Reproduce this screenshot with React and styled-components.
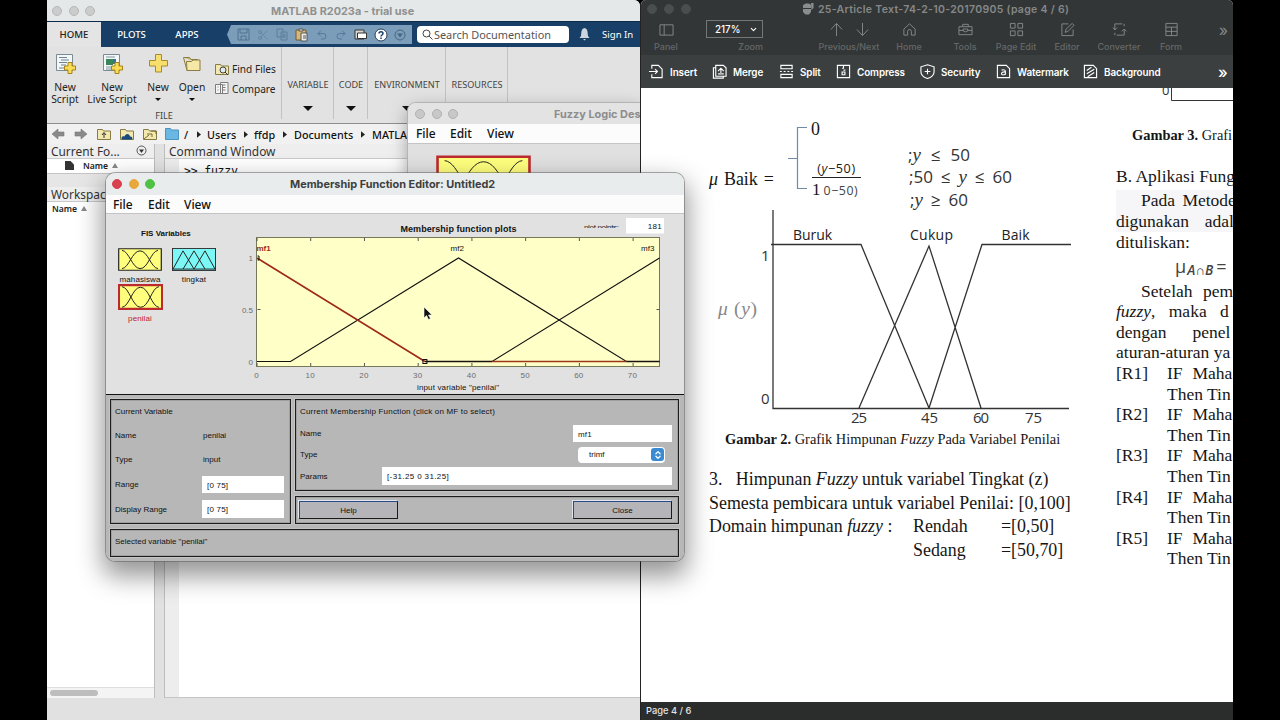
import React from 'react';
import styled, { createGlobalStyle } from 'styled-components';
import { Undo2, Redo2, Scissors, ChevronDown, ChevronsUpDown } from 'lucide-react';

const GlobalStyle = createGlobalStyle`
  * {
    box-sizing: border-box;
  }
  body {
    margin: 0;
    background: #000;
    overflow: hidden;
  }
  svg {
    display: block;
    flex: none;
  }
`;

const Desktop = styled.div`
  position: relative;
  width: 1280px;
  height: 720px;
  background: #000;
  overflow: hidden;
  white-space: nowrap;
  font-family: "Noto Sans", sans-serif;
`;

const Window = styled.section`
  position: absolute;
  display: flex;
  flex-direction: column;
  overflow: hidden;
`;

const TitleBar = styled.header`
  display: flex;
  align-items: center;
  flex: none;
  height: ${props => props.$h}px;
  padding-left: ${props => props.$left}px;
  background: ${props => props.$bg};
`;

const Lights = styled.div`
  display: flex;
  gap: ${props => props.$gap || 6.5}px;
`;

const Light = styled.i`
  width: 10px;
  height: 10px;
  border-radius: 50%;
  background: ${props => props.$color};
  border: 1px solid ${props => props.$edge || props.$color};
`;

const Title = styled.h1`
  margin: 0 0 0 ${props => props.$left}px;
  font: ${props => props.$weight || 700} ${props => props.$size || 10.9}px Inter, sans-serif;
  letter-spacing: ${props => props.$ls || 0}px;
  color: ${props => props.$color};
`;

/* ---------- MATLAB desktop ---------- */

const MatlabWindow = styled(Window)`
  left: 47px;
  top: 0;
  width: 593px;
  height: 720px;
  background: #e1e1e1;
  border-radius: 0 6px 0 0;
`;

const TabBar = styled.nav`
  display: flex;
  align-items: center;
  height: 26px;
  flex: none;
  background: #173f67;
  border-top: 1px solid #0d2a4a;
`;

const Tab = styled.div`
  width: ${props => props.$w}px;
  height: 25px;
  line-height: 25px;
  text-align: center;
  font-size: 9.6px;
  font-weight: 500;
  color: ${props => (props.$active ? '#222' : '#fff')};
  background: ${props => (props.$active ? '#e4e4e4' : 'none')};
`;

const QuickAccess = styled.div`
  display: flex;
  align-items: center;
  gap: 6.8px;
  width: 185px;
  height: 19px;
  margin-left: 15px;
  padding-left: 10px;
  background: #7c9db9;
  clip-path: polygon(0 50%, 4px 0, 100% 0, 100% 100%, 4px 100%);
`;

const SearchBox = styled.div`
  display: flex;
  align-items: center;
  width: 152px;
  height: 17px;
  margin-left: 5px;
  padding-left: 5px;
  gap: 1px;
  border-radius: 4px;
  background: #fff;
  color: #555;
  font-size: 10.9px;
`;

const BellIcon = styled.svg`
  margin-left: 10px;
`;

const SignIn = styled.span`
  margin-left: 12px;
  font-size: 9.6px;
  color: #fff;
`;

const ToolStrip = styled.div`
  display: flex;
  height: 77px;
  flex: none;
  background: #e2e2e2;
  border-bottom: 1px solid #8e8e8e;
`;

const FileSection = styled.div`
  width: 235px;
  height: 72px;
  border-right: 1px solid #c2c2c2;
`;

const FileTools = styled.div`
  display: flex;
  height: 63px;
  padding-top: 6px;
`;

const Tool = styled.div`
  display: flex;
  flex-direction: column;
  align-items: center;
  width: ${props => props.$w}px;
  font-size: 10.3px;
  line-height: 12.4px;
  color: #222;
  text-align: center;
  white-space: pre;

  & > span {
    margin: 7px -10px 0;
  }
  & > i {
    margin-top: 5px;
  }
`;

const SideTools = styled.div`
  display: flex;
  flex-direction: column;
  gap: 4px;
  padding: 8px 0 0 6px;
`;

const SideTool = styled.div`
  display: flex;
  align-items: center;
  gap: 3px;
  height: 16px;
  font-size: 10.1px;
  color: #222;
`;

const SectionName = styled.div`
  text-align: center;
  font-size: 9.1px;
  line-height: 11px;
  color: #444;
`;

const StripSection = styled.div`
  display: flex;
  flex-direction: column;
  align-items: center;
  width: ${props => props.$w}px;
  height: 72px;
  padding: 32px 0 0 1px;
  gap: 16px;
  border-right: 1px solid #c2c2c2;
`;

const Arrow = styled.i`
  width: 0;
  height: 0;
  border: ${props => props.$s || 5}px solid transparent;
  border-top-color: #111;
  border-bottom: 0;
`;

const AddressBar = styled.div`
  display: flex;
  align-items: center;
  height: 20px;
  flex: none;
  background: #f1f1f1;
  font-size: 10.8px;
  font-weight: 500;
  color: #111;
`;

const NavIcons = styled.div`
  display: flex;
  align-items: center;
  gap: 9px;
  width: 118px;
  padding-left: 4px;
`;

const Crumb = styled.span`
  flex: none;
  width: ${props => props.$w}px;
`;

const Panes = styled.div`
  display: flex;
  height: 554px;
  flex: none;
`;

const LeftPane = styled.div`
  width: 108px;
  border-right: 1px solid #bdbdbd;
  display: flex;
  flex-direction: column;
  background: #fff;
`;

const PaneHeader = styled.div`
  display: flex;
  align-items: center;
  justify-content: space-between;
  height: 15px;
  flex: none;
  padding: 0 7px 1px 4px;
  background: #eeeeee;
  border-bottom: 1px solid #c9c9c9;
  font-size: 11.9px;
  line-height: 14px;
  color: #333;
`;

const ColumnRow = styled.div`
  display: flex;
  align-items: center;
  gap: 4px;
  height: 14px;
  flex: none;
  padding: 0 0 1px ${props => props.$left}px;
  font-size: 8.6px;
  font-weight: 600;
  color: #222;
`;

const Divider = styled.div`
  height: 14px;
  flex: none;
  background: #e6e6e6;
  border-top: 1px solid #c5c5c5;
`;

const ScrollTrack = styled.div`
  height: 11px;
  margin-top: auto;
  padding: 2px 3px;
  background: #f4f4f4;
  border-top: 1px solid #dedede;

  & > i {
    display: block;
    width: 48px;
    height: 6px;
    border-radius: 3px;
    background: #bdbdbd;
  }
`;

const CommandPane = styled.div`
  flex: 1;
  margin-left: 9px;
  border-left: 1px solid #bdbdbd;
  border-bottom: 1px solid #c5c5c5;
`;

const CommandBody = styled.pre`
  margin: 0;
  height: 538px;
  padding: 6px 0 0 5px;
  border-left: 14px solid #ededed;
  background: #fff;
  font: 11.5px/13px "DejaVu Sans Mono", monospace;
  letter-spacing: -0.2px;
  color: #111;
`;

/* ---------- Fuzzy logic designer ---------- */

const FuzzyWindow = styled(Window)`
  left: 408px;
  top: 103px;
  width: 232px;
  height: 400px;
  background: #e0e0e0;
  border-radius: 8px 0 0 0;
  box-shadow: 0 0 0 1px #b4b4b4, 0 6px 18px rgba(0, 0, 0, 0.35);
`;

const MenuBar = styled.div`
  display: flex;
  align-items: center;
  flex: none;
  height: ${props => props.$h}px;
  padding-left: ${props => props.$left}px;
  background: #fbfcfb;
  border-bottom: 1px solid #c4c4c4;
  font-size: 12px;
  font-weight: 500;
  color: #111;
`;

const MenuItem = styled.span`
  width: ${props => props.$w}px;
`;

const DesignerBody = styled.div`
  padding: 11px 0 0 28px;
`;

/* ---------- Membership function editor ---------- */

const EditorWindow = styled(Window)`
  left: 106px;
  top: 173px;
  width: 578px;
  height: 388px;
  background: #e1e1e1;
  border-radius: 9px;
  box-shadow: 0 0 0 1px rgba(90, 90, 90, 0.5), 0 12px 26px 3px rgba(0, 0, 0, 0.42);
`;

const PlotArea = styled.div`
  display: flex;
  height: 181px;
  flex: none;
  border-bottom: 1px solid #111;
  font: 8px "Liberation Sans", sans-serif;
`;

const Variables = styled.div`
  width: 122px;
  padding: 15px 0 0 11px;
`;

const VariablesTitle = styled.div`
  height: 18px;
  padding-left: 24px;
  font-weight: 700;
  color: #111;
`;

const VariableGrid = styled.div`
  display: grid;
  grid-template-columns: 46px 46px;
  column-gap: 8px;
`;

const Variable = styled.div`
  display: flex;
  flex-direction: column;
  align-items: center;
  height: 37px;
  gap: 3.5px;
  color: ${props => (props.$selected ? '#c0222f' : '#111')};
  padding-top: ${props => (props.$selected ? 0 : 1)}px;
  letter-spacing: 0.1px;
`;

const FormArea = styled.div`
  display: grid;
  grid-template-columns: 181px 384px;
  grid-template-rows: 92px 28px 28px;
  gap: 5px 4px;
  padding: 4px 4px;
  flex: 1;
  background: #b7b7b7;
  font: 8px "Liberation Sans", sans-serif;
  color: #111;
`;

const Panel = styled.div`
  border: 1px solid #1c1c1c;
  box-shadow: inset 0 0 0 1px rgba(90, 90, 90, 0.25), 0 0 0 1px rgba(220, 220, 220, 0.35);
  padding-left: 4px;
`;

const CurrentPanel = styled(Panel)`
  grid-row: 1 / 3;
`;

const StatusPanel = styled(Panel)`
  grid-column: 1 / 3;
  line-height: 24px;
`;

const ButtonPanel = styled(Panel)`
  display: flex;
  align-items: center;
  justify-content: space-between;
  padding: 0 6px 0 3px;
`;

const PanelTitle = styled.div`
  height: 23px;
  line-height: 23px;
  letter-spacing: ${props => props.$ls || 0}px;
`;

const Field = styled.div`
  display: flex;
  align-items: center;
  height: ${props => props.$h}px;
`;

const FieldLabel = styled.span`
  width: ${props => props.$w}px;
`;

const Input = styled.div`
  width: ${props => props.$w}px;
  height: 17.5px;
  margin-left: ${props => props.$left || 0}px;
  padding-left: 5px;
  line-height: 19px;
  letter-spacing: ${props => props.$ls || 0.2}px;
  background: #fff;
`;

const Select = styled.div`
  display: flex;
  align-items: center;
  justify-content: space-between;
  width: 87px;
  height: 16px;
  margin-left: 197px;
  padding: 0 1px 0 11px;
  border-radius: 4px;
  background: #fff;
`;

const Stepper = styled.i`
  display: flex;
  align-items: center;
  justify-content: center;
  width: 13px;
  height: 13px;
  border-radius: 3px;
  background: #3a8bd2;
  color: #fff;
`;

const PushButton = styled.div`
  width: 99px;
  height: 18px;
  line-height: 17px;
  text-align: center;
  background: #b5b5b9;
  border: 1px solid #1a1a1a;
  border-top-color: #2c4a86;
  border-left-color: #2c4a86;
  box-shadow: -1px -1px 0 #dfe6ee;
`;

/* ---------- PDF reader ---------- */

const PdfWindow = styled(Window)`
  left: 641px;
  top: 0;
  width: 592px;
  height: 720px;
  background: #fff;
  border-radius: 5px 5px 0 0;
  box-shadow: -1px 0 0 #222;
`;

const PdfTools = styled.div`
  display: grid;
  grid-template-columns: 50px 128px 60px 60px 52px 50px 52px 52px 52px 36px;
  height: 37px;
  flex: none;
  background: #333636;
  font: 500 9px Inter, sans-serif;
`;

const PdfTool = styled.div`
  display: flex;
  flex-direction: column;
  align-items: center;
  justify-content: space-between;
  height: 34px;
  padding: 3px 0 0;
  color: #646868;

  & > div {
    display: flex;
    gap: 11px;
    height: 17px;
    align-items: center;
    color: #858989;
  }
`;

const ZoomTool = styled(PdfTool)`
  align-items: flex-end;
  width: 72px;
  padding-top: 2px;
`;

const ZoomBox = styled.div`
  && {
    justify-content: space-between;
    width: 57px;
    height: 18px;
    padding: 0 4px 0 8px;
    border: 1px solid #737777;
    color: #fff;
    font-size: 9.8px;
    gap: 0;
  }
`;

const MoreTools = styled(PdfTool)`
  align-items: flex-end;
  padding-right: 5px;
`;

const ActionBar = styled.div`
  display: flex;
  align-items: center;
  height: 33px;
  flex: none;
  padding-left: 8px;
  background: #3b3f3f;
  color: #fff;
  font: 600 9.9px Inter, sans-serif;
`;

const Action = styled.div`
  display: flex;
  align-items: center;
  gap: 6px;
  width: ${props => props.$w}px;
  letter-spacing: -0.1px;
`;

const More = styled.span`
  font: ${props => props.$weight || 400} 16px/20px Inter, sans-serif;
`;

const Page = styled.main`
  display: flex;
  height: 614px;
  flex: none;
  background: #fff;
  font-family: "Liberation Serif", serif;
  font-size: 17.9px;
  color: #161616;
  overflow: hidden;
`;

const LeftColumn = styled.article`
  width: 475px;
  padding-left: 68px;
`;

const RightColumn = styled.article`
  width: 117px;
  font-size: 17.5px;
`;

const Formula = styled.div`
  display: flex;
  height: 117px;
  padding-top: 31px;
`;

const FormulaName = styled.div`
  width: 78px;
  padding-top: 50px;
  line-height: 20px;
  word-spacing: 1.5px;
`;

const Cases = styled.div`
  width: 101px;
  padding-left: 4px;
  line-height: 20px;
`;

const Fraction = styled.div`
  width: 49px;
  margin: 23px 0 0 1px;
  text-align: center;
  font: 12.6px/14px "Open Sans", sans-serif;

  & > div:first-child {
    border-bottom: 1.5px solid #222;
    height: 16px;
    letter-spacing: 0.6px;
  }
`;

const Overlap = styled.div`
  display: flex;
  align-items: baseline;
  gap: 3px;
  font: 12.3px/16px "Open Sans", sans-serif;
  letter-spacing: 0.6px;
  color: #444;

  & > b {
    font: 17px/24px "Liberation Serif", serif;
    letter-spacing: 0;
    color: #161616;
  }
`;

const Conditions = styled.div`
  padding-top: 25px;
  font: 17px/22.3px "Open Sans", sans-serif;
  color: #333;

  & > div {
    word-spacing: ${props => props.$ws}px;
  }
  & i {
    font-family: "Liberation Serif", serif;
    font-size: 19px;
  }
`;

const Condition = styled.p`
  margin: 0;
  padding-left: ${props => props.$left || 0}px;
  word-spacing: ${props => props.$ws}px;
`;

const Caption = styled.div`
  height: 21px;
  margin: ${props => props.$m};
  font-size: 14.4px;
  line-height: 21px;
`;

const TextLine = styled.div`
  display: flex;
  height: ${props => props.$h || 20.6}px;
  line-height: ${props => props.$h || 20.6}px;
  padding-left: ${props => props.$left || 0}px;
  word-spacing: ${props => props.$ws || 0}px;
  white-space: pre;
`;

const Cell = styled.span`
  flex: none;
  width: ${props => props.$w}px;
`;

const Shaded = styled.div`
  background: #f6f6f8;
  height: 42px;
  margin-top: 4px;
`;

const Intersection = styled.div`
  display: flex;
  height: 28px;
  padding-left: 59px;
  font: 18px/27px "Open Sans", sans-serif;
  color: #444;

  & > sub {
    font: italic 600 13.5px/34px "Open Sans", sans-serif;
    vertical-align: baseline;
    margin: 0 3px 0 1px;
  }
`;

const PdfFooter = styled.footer`
  height: 18px;
  padding-left: 5px;
  font: 500 9.3px/18px Inter, sans-serif;
  color: #e4e4e4;
  background: #2b2d2d;
`;

const DocIcon = styled.svg`
  margin-left: 111px;
`;

const Pointer = styled.svg`
  position: absolute;
  left: 423px;
  top: 306px;
`;

const Gaussians = ({ w, h, selected }) => (
  <svg width={w} height={h} viewBox="0 0 44 24" preserveAspectRatio="none">
    <rect x=".7" y=".8" width="42.600" height="22.400" fill="#ffff7d" stroke={selected ? '#bb2a2e' : '#222'} strokeWidth={selected ? 2.6 : 1.2} vectorEffect="non-scaling-stroke" />
    <path d="M4 2.500C11 3 14 21 22 21.500S33 3 40 2.500M4 21.500C11 21 14 3 22 3S33 21 40 21.500" fill="none" stroke="#222" vectorEffect="non-scaling-stroke" />
  </svg>
);

const Triangles = () => (
  <svg width="44" height="23" viewBox="0 0 44 24" preserveAspectRatio="none">
    <rect x=".5" y=".5" width="43" height="23" fill="#7df7f5" stroke="#333" />
    <path d="M1 22 11 3 22 22M11 22 22 3 33 22M22 22 33 3 43 22M1 22H43" fill="none" stroke="#222" />
  </svg>
);

const ScriptIcon = ({ live }) => (
  <svg width="21" height="21" viewBox="0 0 21 21">
    <path d="M1.500 1.500h16v16h-16z" fill="#f4f7f8" stroke="#7b8b94" />
    {live ? (
      <>
        <path d="M4 4h9M4 14h5M4 16h6" stroke="#7f97a3" />
        <path d="M4 6h7v6H4z" fill="#39855a" />
        <path d="M11 6h3v5h-3z" fill="#3e6f9c" />
      </>
    ) : (
      <path d="M4 4.500h8M6 7h8M4 9.500h8M6 12h5M4 15h6" stroke="#6d8390" />
    )}
    <path d="M13 9.500h4v3.500h3.500v4H17v3.500h-4V17H9.500v-4H13z" fill="#f9dc55" stroke="#a98318" />
  </svg>
);

const PlusIcon = () => (
  <svg width="21" height="21" viewBox="0 0 21 21">
    <path d="M7.500 1.500h6v6h6v5.500h-6v6h-6v-6h-6V7.500h6z" fill="#f8df6d" stroke="#a98a2a" />
  </svg>
);

const OpenIcon = () => (
  <svg width="20" height="21" viewBox="0 0 20 21">
    <path d="M1.500 4.500h6l1.500 2h6.500v3M1.500 4.500 5 17.500" fill="#cdb75b" stroke="#8b7c3f" />
    <path d="M4.500 8.500h5l1.500-1.500h7v10.500H5z" fill="#f6e8a6" stroke="#8b7c3f" />
  </svg>
);

const FolderIcon = ({ kind }) => (
  <svg width="14" height="12" viewBox="0 0 14 12">
    <path d="M.5 1.500h5l1 1.500h7v8.500H.5z" fill="#f3e9b0" stroke="#877b45" />
    {kind === 'up' && <path d="M7 10V5M5 7l2-2.500L9 7" fill="none" stroke="#333" />}
    {kind === 'cloud' && <path d="M2 11.500c-1.500-3 1-4 2.500-3C5.500 5 9.500 5 10 8.500c2.500 0 3 2 2 3z" fill="#174c80" />}
    {kind === 'browse' && <path d="M1 11l5-4M4 6h5v3M8 3h5v3" fill="none" stroke="#7a6a2a" />}
    {kind === 'find' && <><circle cx="8" cy="7" r="3" fill="#dfeaf0" stroke="#444" /><path d="M10 9l3 3" stroke="#333" /></>}
  </svg>
);

const NavArrow = ({ flip }) => (
  <svg width="14" height="12" viewBox="0 0 14 12">
    <path d="M1 6l6-5v3h6v4H7v3z" fill="#8a8a8a" stroke="#777" strokeWidth=".6" transform={flip ? 'rotate(180 7 6)' : undefined} />
  </svg>
);

const CompareIcon = () => (
  <svg width="14" height="14" viewBox="0 0 14 14" fill="#f5f5f5" stroke="#7d7d7d">
    <path d="M.5 2.500h7v9h-7zM5.500.5h7.500v11H5.500zM7.500 3h3M7.500 5.500h3M8 8h2.500M2.500 5h1M2.500 8h1" />
  </svg>
);

const Caret = () => (
  <svg width="4" height="7" viewBox="0 0 5 8"><path d="M0 0l5 4-5 4z" fill="#222" /></svg>
);

const SortMark = () => (
  <svg width="6" height="5" viewBox="0 0 6 5"><path d="M0 5l3-5 3 5z" fill="#888" /></svg>
);

const QuickIcons = () => (
  <>
    <svg width="13" height="13" viewBox="0 0 13 13" fill="none" stroke="#4f7390"><path d="M1 1h11v11H1zM3 1v4h7V1M4 12V8h5v4" /></svg>
    <Scissors size={12} color="#62839e" strokeWidth={1.6} />
    <svg width="13" height="13" viewBox="0 0 13 13" fill="none" stroke="#5d7f9b"><path d="M1 1h6v8H1zM5 4h6v8H5zM7 7h3M7 9h3" /></svg>
    <svg width="14" height="14" viewBox="0 0 14 14"><path d="M1 2h10v10H1z" fill="#d8b779" stroke="#705c36" /><path d="M4 1h4v2H4zM6 5h6v8H6zM8 8h3M8 10h3" fill="#eee" stroke="#555" /></svg>
    <Undo2 size={12} color="#55789a" strokeWidth={2} />
    <Redo2 size={12} color="#55789a" strokeWidth={2} />
    <svg width="13" height="12" viewBox="0 0 13 12"><path d="M1 1h9v9H1z" fill="#d8d8d0" stroke="#333" /><path d="M3.500 4h9v5.500h-9z" fill="#fff" stroke="#333" /></svg>
    <svg width="14" height="14" viewBox="0 0 14 14"><circle cx="7" cy="7" r="6" fill="#fff" stroke="#27425c" /><path d="M5 5.500C5 3 9 3 9 5.500 9 7 7 7 7 8.500M7 9.500V11" fill="none" stroke="#173f67" strokeWidth="1.500" /></svg>
    <svg width="12" height="12" viewBox="0 0 12 12"><circle cx="6" cy="6" r="5" fill="none" stroke="#466681" /><path d="M3 4.500h6L6 8.500z" fill="#466681" /></svg>
  </>
);

const Line = ({ d, sw = 1 }) => (
  <svg width="15" height="15" viewBox="0 0 16 16" fill="none" stroke="currentColor" strokeWidth={sw}>
    <path d={d} />
  </svg>
);

const pdfTools = [
  { name: 'Home', d: 'M2 7.500 8 2l6 5.500V14h-4v-4a2 2 0 0 0-4 0v4H2z' },
  { name: 'Tools', d: 'M1 5h14v8.500H1zM5 5V2.500h6V5M1 9h4.500M10.500 9H15M5.500 7.500h5v1a2.500 2 0 0 1-5 0z' },
  { name: 'Page Edit', d: 'M1.500 1.500h5v5h-5zM9.500 1.500h5v5h-5zM1.500 9.500h5v5h-5zM9.500 9.500h5v5h-5z' },
  { name: 'Editor', d: 'M9 2H2v12.500h12V8M5.500 11l1-3.500L13 1.500 15 3.500 8.500 10z' },
  { name: 'Converter', d: 'M3 8V2h8M1 6l2 2.500L5.500 6M13 8v6H5M10.500 10 13 7.500 15.500 10M13 2v2.500M3 14v-2.500' },
  { name: 'Form', d: 'M2 1.500h12v13H2zM2 5.500h12M8 5.500v9M2 10h12' },
];

const actions = [
  { name: 'Insert', w: 63, d: 'M3 5V1.500h7L14 5.500v9H3V11M0 8h9M6.500 5.500 9 8l-2.500 2.500' },
  { name: 'Merge', w: 67, d: 'M4 1.500h8L15 4v9H4zM4 4H1.500v11H12V13M9.500 11.500V4.500M6.500 7.500l3-3 3 3M6.500 10.500h2M10.500 10.500h2' },
  { name: 'Split', w: 57, d: 'M2 5V1.500h12V5zM2 14.500V11h12v3.500zM1 8h2M5 8h2M9 8h2M13 8h2' },
  { name: 'Compress', w: 84, d: 'M1.500 1.500h13v13h-13zM8 2v2M6.500 4.500h2M8 6.500h2M6.500 8.500h3v3h-3z' },
  { name: 'Security', w: 76, d: 'M8 .8 15 3v5.500C15 12 11 14.500 8 15.500 5 14.500 1 12 1 8.500V3zM8 5v6M5 8h6' },
  { name: 'Watermark', w: 87, d: 'M1.500 1.500H11L14.500 5v9.500h-13zM6 6.500c3.500-1 4 .5 4 1.500v3.500M10 8.500c-5-.5-5 3-2.500 3 1.500 0 2.500-1 2.500-1.500' },
  { name: 'Background', w: 135, d: 'M1.500 1.500H11L14.500 5v9.500h-13zM4 7l5-3.500M4 10.500l8-5M5 13.500l7-4.500' },
];

const tickX = [0, 10, 20, 30, 40, 50, 60, 70];
const px = v => 24.5 + v * 5.373;

const MembershipPlot = () => (
  <svg width="448" height="178" viewBox="0 0 448 178" fontFamily="Liberation Sans" fontSize="8">
    <g transform="translate(4.500 0)">
      <rect x="24" y="23.500" width="403" height="129" fill="#ffffc8" stroke="#77775c" />
      {tickX.map(v => (
        <g key={v}>
          <path d={`M${px(v)} 152v-3M${px(v)} 24v3`} stroke="#555" />
          <text x={px(v) - 0.5} y="164" textAnchor="middle" fill="#6d6d6d" letterSpacing=".3">{v}</text>
        </g>
      ))}
      <path d="M25 95.500h3M427 95.500h-3" stroke="#555" />
      <g fill="#6d6d6d" textAnchor="end">
        <text x="20.500" y="47">1</text>
        <text x="20.500" y="98.500">0.5</text>
        <text x="20.500" y="151">0</text>
      </g>
      <g fill="none" stroke="#111" strokeWidth="1.100">
        <path d={`M24.500 147.500H${px(6.25)}L${px(37.5)} 44L${px(68.75)} 147.500H427`} />
        <path d={`M${px(31.25)} 147.500H${px(43.75)}L427 44`} />
      </g>
      <path d={`M24.500 44 ${px(31.25)} 147.500`} fill="none" stroke="#9d2a18" strokeWidth="1.600" />
      <path d={`M${px(31.25)} 147.500H${px(43.75)}M${px(68.75)} 147.500H427`} stroke="#1a1010" strokeWidth="1.700" />
      <path d={`M${px(43.75)} 147.500H${px(68.75)}`} stroke="#9d3518" strokeWidth="1.600" />
      <path d="M25 42h1.500v4H25" fill="none" stroke="#111" />
      <rect x={px(31.25) - 2} y="145.500" width="4" height="4" fill="none" stroke="#111" />
      <text x="24" y="37" fill="#9d2a18" fontWeight="700">mf1</text>
      <text x="218" y="37" fill="#111">mf2</text>
      <text x="408.500" y="37" fill="#111">mf3</text>
      <text x="168" y="18" fontSize="9" fontWeight="700" fill="#111" textLength="116">Membership function plots</text>
      <text x="184.500" y="175.500" fill="#111" textLength="82">input variable "penilai"</text>
      <svg x="350.500" y="10" width="40" height="4"><text x="1" y="5.500" fontSize="8" fill="#222" textLength="35">plot points:</text></svg>
      <rect x="393.500" y="4" width="38" height="15.500" fill="#fff" />
      <text x="429.500" y="15" textAnchor="end" fill="#111" letterSpacing=".3">181</text>
    </g>
  </svg>
);

const VariableChart = () => (
  <svg width="400" height="222" viewBox="0 0 400 222">
    <g transform="translate(-709 -205)" fill="none" stroke="#333" strokeWidth="1.300">
      <path d="M773 210V408.500H1069M771 244.500H861L929 408M859 408 929 246 981 408M929 408 982 244.500H1071" />
    </g>
    <g transform="translate(-709 -205)" fontFamily="Open Sans" fontSize="14" fill="#222">
      <text x="793" y="240" textLength="39">Buruk</text>
      <text x="910" y="240" textLength="43">Cukup</text>
      <text x="1001.500" y="240" textLength="28">Baik</text>
      <g fontSize="15" fill="#333">
        <text x="761" y="261">1</text>
        <text x="761" y="404">0</text>
        <text x="851" y="423" textLength="16">25</text>
        <text x="921" y="423" textLength="17">45</text>
        <text x="973" y="423" textLength="16">60</text>
        <text x="1025" y="423" textLength="17">75</text>
      </g>
      <text x="718" y="315" fontFamily="Liberation Serif" fontSize="19.500" fill="#888" textLength="39"><tspan fontStyle="italic">μ</tspan> (<tspan fontStyle="italic">y</tspan>)</text>
    </g>
  </svg>
);

const sections = [
  { name: 'VARIABLE', w: 52 },
  { name: 'CODE', w: 34 },
  { name: 'ENVIRONMENT', w: 78 },
  { name: 'RESOURCES', w: 62 },
];

const rules = [1, 2, 3, 4, 5];

const App = () => (
  <Desktop>
    <GlobalStyle />

    <MatlabWindow>
      <TitleBar $h={21} $left={5} $bg="#e5e8e8">
        <Lights>
          {[0, 1, 2].map(n => <Light key={n} $color="#cbcccc" $edge="#b6b7b7" />)}
        </Lights>
        <Title $left={176} $color="#8f9191">MATLAB R2023a - trial use</Title>
      </TitleBar>
      <TabBar>
        <Tab $w={54} $active>HOME</Tab>
        <Tab $w={61}>PLOTS</Tab>
        <Tab $w={50}>APPS</Tab>
        <QuickAccess><QuickIcons /></QuickAccess>
        <SearchBox>
          <svg width="11" height="11" viewBox="0 0 11 11" fill="none" stroke="#444"><circle cx="4.500" cy="4.500" r="3.500" /><path d="M7 7l3.500 3.500" /></svg>
          Search Documentation
        </SearchBox>
        <BellIcon width="11" height="13" viewBox="0 0 11 13"><path d="M5.500 0C2 1 2.500 4 2 8L.5 10h10L9 8C8.500 4 9 1 5.500 0zM4 11h3l-1.500 1.500z" fill="#cdd6de" /></BellIcon>
        <SignIn>Sign In</SignIn>
      </TabBar>
      <ToolStrip>
        <FileSection>
          <FileTools>
            <Tool $w={36}><ScriptIcon /><span>{'New\nScript'}</span></Tool>
            <Tool $w={58}><ScriptIcon live /><span>{'New\nLive Script'}</span></Tool>
            <Tool $w={34}><PlusIcon /><span>New</span><Arrow $s={3.5} /></Tool>
            <Tool $w={34}><OpenIcon /><span>Open</span><Arrow $s={3.5} /></Tool>
            <SideTools>
              <SideTool><FolderIcon kind="find" />Find Files</SideTool>
              <SideTool><CompareIcon />Compare</SideTool>
            </SideTools>
          </FileTools>
          <SectionName>FILE</SectionName>
        </FileSection>
        {sections.map(section => (
          <StripSection key={section.name} $w={section.w}>
            <SectionName>{section.name}</SectionName>
            <Arrow />
          </StripSection>
        ))}
      </ToolStrip>
      <AddressBar>
        <NavIcons>
          <NavArrow />
          <NavArrow flip />
          <FolderIcon kind="up" />
          <FolderIcon kind="cloud" />
          <FolderIcon kind="browse" />
        </NavIcons>
        <Crumb $w={19}><svg width="14" height="12"><path d="M.5.5h5l1 1.500h7v9.500H.5z" fill="#69b7e2" stroke="#4b93bd" /></svg></Crumb>
        <Crumb $w={13}>/</Crumb>
        <Crumb $w={10}><Caret /></Crumb>
        <Crumb $w={37}>Users</Crumb>
        <Crumb $w={10}><Caret /></Crumb>
        <Crumb $w={29}>ffdp</Crumb>
        <Crumb $w={11}><Caret /></Crumb>
        <Crumb $w={67}>Documents</Crumb>
        <Crumb $w={11}><Caret /></Crumb>
        <Crumb $w={50}>MATLA</Crumb>
      </AddressBar>
      <Panes>
        <LeftPane>
          <PaneHeader>
            Current Fo...
            <svg width="11" height="11" viewBox="0 0 11 11"><circle cx="5.500" cy="5.500" r="4.500" fill="none" stroke="#555" /><path d="M3 4.500h5L5.500 8z" fill="#333" /></svg>
          </PaneHeader>
          <ColumnRow $left={18}>
            <svg width="9" height="9"><path d="M0 0h5.500L9 3.500V9H0z" fill="#333" /></svg>
            <Crumb $w={1} />
            Name <SortMark />
          </ColumnRow>
          <Divider />
          <PaneHeader>Workspace</PaneHeader>
          <ColumnRow $left={5}>Name <SortMark /></ColumnRow>
          <ScrollTrack><i /></ScrollTrack>
        </LeftPane>
        <CommandPane>
          <PaneHeader>Command Window</PaneHeader>
          <CommandBody>&gt;&gt; fuzzy</CommandBody>
        </CommandPane>
      </Panes>
    </MatlabWindow>

    <FuzzyWindow>
      <TitleBar $h={21} $left={7} $bg="#e3e3e3">
        <Lights>
          {[0, 1, 2].map(n => <Light key={n} $color="#c8c8c8" $edge="#b0b0b0" />)}
        </Lights>
        <Title $left={96} $color="#8d8d8d">Fuzzy Logic Des</Title>
      </TitleBar>
      <MenuBar $h={20} $left={8}>
        <MenuItem $w={34}>File</MenuItem>
        <MenuItem $w={37}>Edit</MenuItem>
        <MenuItem>View</MenuItem>
      </MenuBar>
      <DesignerBody><Gaussians w={95} h={54} selected /></DesignerBody>
    </FuzzyWindow>

    <PdfWindow>
      <TitleBar $h={18} $left={6} $bg="#333636">
        <Lights $gap={7}>
          {[0, 1, 2].map(n => <Light key={n} $color="#4b4e4e" />)}
        </Lights>
        <DocIcon width="13" height="12" viewBox="0 0 13 12"><path d="M1 5V2.500C3 0 7 0 9 2v3zM1 6h8v3L7 11.500H3.500L1 9zM9 0h2.500v5l-2 2" fill="#8b8e8e" /></DocIcon>
        <Title $left={3} $size={10.5} $color="#858888" $weight={600} $ls={0.31}>25-Article Text-74-2-10-20170905 (page 4 / 6)</Title>
      </TitleBar>
      <PdfTools>
        <PdfTool>
          <div><Line d="M1 3h14v11H1zM5.500 3v11" /></div>
          Panel
        </PdfTool>
        <ZoomTool>
          <ZoomBox>217%<ChevronDown size={9} strokeWidth={3} /></ZoomBox>
          Zoom
        </ZoomTool>
        <PdfTool>
          <div>
            <Line d="M8 15V2M2 8l6-6.500L14 8" />
            <Line d="M8 1v13M2 8l6 6.500L14 8" />
          </div>
          Previous/Next
        </PdfTool>
        {pdfTools.map(t => (
          <PdfTool key={t.name}>
            <div><Line d={t.d} /></div>
            {t.name}
          </PdfTool>
        ))}
        <MoreTools><div><More>»</More></div></MoreTools>
      </PdfTools>
      <ActionBar>
        {actions.map(a => (
          <Action key={a.name} $w={a.w}>
            <Line d={a.d} sw={1.2} />
            {a.name}
          </Action>
        ))}
        <More $weight={500}>»</More>
      </ActionBar>
      <Page>
        <LeftColumn>
          <Formula>
            <FormulaName><i>μ</i> Baik =</FormulaName>
            <svg width="20" height="70" viewBox="0 0 20 70"><path d="M20 8.500H10.500V69.500H20M1 39.500h9.500" fill="none" stroke="#6f8ba5" strokeWidth="1.200" /></svg>
            <Cases>
              0
              <Fraction>
                <div>(<i>y</i>−50)</div>
                <Overlap><b>1</b>0−50)</Overlap>
              </Fraction>
            </Cases>
            <Conditions>
              <Condition $ws={5.5}>;<i>y</i> ≤ 50</Condition>
              <Condition $left={1} $ws={3.5}>;50 ≤ <i>y</i> ≤ 60</Condition>
              <Condition $left={2} $ws={3.5}>;<i>y</i> ≥ 60</Condition>
            </Conditions>
          </Formula>
          <VariableChart />
          <Caption $m="2px 0 18px 16px"><b>Gambar 2.</b> Grafik Himpunan <i>Fuzzy</i> Pada Variabel Penilai</Caption>
          <TextLine $h={23.6}>3.   Himpunan <i>Fuzzy</i> untuk variabel Tingkat (z)</TextLine>
          <TextLine $h={23.6}>Semesta pembicara untuk variabel Penilai: [0,100]</TextLine>
          <TextLine $h={23.6}><Cell $w={204}>Domain himpunan <i>fuzzy</i> :</Cell><Cell $w={88}>Rendah</Cell>=[0,50]</TextLine>
          <TextLine $h={23.6}><Cell $w={204} /><Cell $w={88}>Sedang</Cell>=[50,70]</TextLine>
        </LeftColumn>
        <RightColumn>
          <svg width="117" height="14"><path d="M55.500 0V12.500H117" fill="none" stroke="#333" /><text x="46" y="7" fontFamily="Open Sans" fontSize="13" fill="#333">0</text></svg>
          <Caption $m="22.5px 0 20px 16px"><b>Gambar 3.</b> Grafi</Caption>
          <TextLine>B. Aplikasi Fung</TextLine>
          <Shaded>
            <TextLine $left={25} $ws={3}>Pada Metode</TextLine>
            <TextLine $ws={11.5}>digunakan adal</TextLine>
          </Shaded>
          <TextLine>dituliskan:</TextLine>
          <Intersection>μ<sub>A∩B</sub>=</Intersection>
          <TextLine $left={25} $ws={6}>Setelah pem</TextLine>
          <TextLine $ws={9}><i>fuzzy</i>, maka d</TextLine>
          <TextLine $ws={21.5}>dengan penel</TextLine>
          <TextLine>aturan-aturan ya</TextLine>
          {rules.map(n => (
            <React.Fragment key={n}>
              <TextLine $ws={5.5}><Cell $w={51}>[R{n}]</Cell>IF Maha</TextLine>
              <TextLine $left={51}>Then Tin</TextLine>
            </React.Fragment>
          ))}
        </RightColumn>
      </Page>
      <PdfFooter>Page 4 / 6</PdfFooter>
    </PdfWindow>

    <EditorWindow>
      <TitleBar $h={22} $left={6} $bg="#e9ecec">
        <Lights>
          <Light $color="#d8414d" />
          <Light $color="#e9a83c" />
          <Light $color="#4fc245" />
        </Lights>
        <Title $left={135} $color="#3d3f3f">Membership Function Editor: Untitled2</Title>
      </TitleBar>
      <MenuBar $h={19} $left={7}>
        <MenuItem $w={35}>File</MenuItem>
        <MenuItem $w={36}>Edit</MenuItem>
        <MenuItem>View</MenuItem>
      </MenuBar>
      <PlotArea>
        <Variables>
          <VariablesTitle>FIS Variables</VariablesTitle>
          <VariableGrid>
            <Variable><Gaussians w={44} h={23} />mahasiswa</Variable>
            <Variable><Triangles />tingkat</Variable>
            <Variable $selected><Gaussians w={45} h={26} selected />penilai</Variable>
          </VariableGrid>
        </Variables>
        <MembershipPlot />
      </PlotArea>
      <FormArea>
        <CurrentPanel>
          <PanelTitle>Current Variable</PanelTitle>
          <Field $h={24}><FieldLabel $w={88}>Name</FieldLabel>penilai</Field>
          <Field $h={25}><FieldLabel $w={88}>Type</FieldLabel>input</Field>
          <Field $h={25}><FieldLabel $w={87}>Range</FieldLabel><Input $w={82}>[0 75]</Input></Field>
          <Field $h={24}><FieldLabel $w={87}>Display Range</FieldLabel><Input $w={82}>[0 75]</Input></Field>
        </CurrentPanel>
        <Panel>
          <PanelTitle $ls={0.18}>Current Membership Function (click on MF to select)</PanelTitle>
          <Field $h={21}><FieldLabel $w={81}>Name</FieldLabel><Input $w={99} $left={192}>mf1</Input></Field>
          <Field $h={21}>
            <FieldLabel $w={81}>Type</FieldLabel>
            <Select>trimf<Stepper><ChevronsUpDown size={10} strokeWidth={3} /></Stepper></Select>
          </Field>
          <Field $h={22}><FieldLabel $w={82}>Params</FieldLabel><Input $w={290} $ls={0.38}>[-31.25 0 31.25]</Input></Field>
        </Panel>
        <ButtonPanel>
          <PushButton>Help</PushButton>
          <PushButton>Close</PushButton>
        </ButtonPanel>
        <StatusPanel>Selected variable "penilai"</StatusPanel>
      </FormArea>
    </EditorWindow>

    <Pointer width="10" height="14" viewBox="0 0 10 14"><path d="M1 1v11l2.500-2.500 2 4 2-1-2-3.500H9z" fill="#111" stroke="#fff" strokeWidth=".6" /></Pointer>
  </Desktop>
);

export default App;
